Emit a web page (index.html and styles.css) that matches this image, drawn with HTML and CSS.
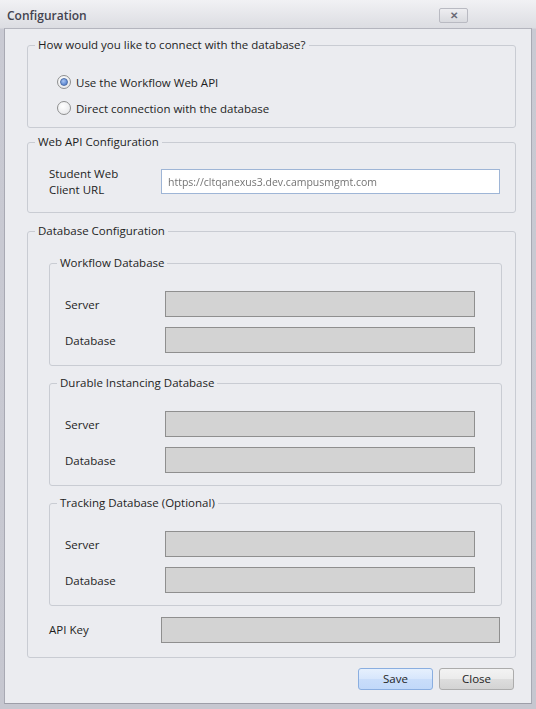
FILE: index.html
```html
<!DOCTYPE html>
<html>
<head>
<meta charset="utf-8">
<link rel="stylesheet" href="styles.css">
</head>
<body>
<div class="window">
  <div class="titlebar">
    <span class="title">Configuration</span>
    <span class="close-x">✕</span>
  </div>
  <div class="content">
    <fieldset class="group g1">
      <legend>How would you like to connect with the database?</legend>
      <label class="radio-row"><span class="radio checked"></span><span>Use the Workflow Web API</span></label>
      <label class="radio-row"><span class="radio"></span><span>Direct connection with the database</span></label>
    </fieldset>

    <fieldset class="group g2">
      <legend>Web API Configuration</legend>
      <div class="url-row">
        <div class="lbl-wide">Student Web<br>Client URL</div>
        <div class="input url"><span class="blur">https://cltqanexus3.dev.campusmgmt.com</span></div>
      </div>
    </fieldset>

    <fieldset class="group g3">
      <legend>Database Configuration</legend>
      <fieldset class="group inner">
        <legend>Workflow Database</legend>
        <div class="row"><div class="lbl">Server</div><div class="input dis"></div></div>
        <div class="row"><div class="lbl">Database</div><div class="input dis"></div></div>
      </fieldset>
      <fieldset class="group inner">
        <legend>Durable Instancing Database</legend>
        <div class="row"><div class="lbl">Server</div><div class="input dis"></div></div>
        <div class="row"><div class="lbl">Database</div><div class="input dis"></div></div>
      </fieldset>
      <fieldset class="group inner last">
        <legend>Tracking Database (Optional)</legend>
        <div class="row"><div class="lbl">Server</div><div class="input dis"></div></div>
        <div class="row"><div class="lbl">Database</div><div class="input dis"></div></div>
      </fieldset>
      <div class="api-row"><div class="lbl-wide">API Key</div><div class="input dis api"></div></div>
    </fieldset>

    <div class="buttons">
      <div class="btn save">Save</div>
      <div class="btn">Close</div>
    </div>
  </div>
</div>
</body>
</html>
```

FILE: styles.css
```css
html, body {
  margin: 0;
  padding: 0;
}
body {
  width: 536px;
  height: 709px;
  overflow: hidden;
  font-family: "Open Sans", "Noto Sans", sans-serif;
  font-size: 11.5px;
  color: #1e1e1e;
}
.window {
  width: 536px;
  height: 709px;
  box-sizing: border-box;
  background: linear-gradient(#f1f1f4 0px, #dcdde2 28px, #c9cad3 29px, #c6c7d0 100%);
  display: flex;
  flex-direction: column;
}
.titlebar {
  height: 28px;
  flex: none;
  display: flex;
  align-items: center;
  position: relative;
}
.title {
  margin-left: 7px;
  font-weight: 600;
  font-size: 12px;
  color: #43434f;
  margin-top: 2px;
}
.close-x {
  position: absolute;
  left: 439px;
  top: 8px;
  width: 29px;
  height: 15px;
  box-sizing: border-box;
  border: 1px solid #b9bac2;
  border-radius: 2px;
  background: linear-gradient(#eeeef1, #d9dadf);
  color: #6a6a76;
  font-size: 10px;
  font-weight: 700;
  line-height: 13px;
  text-align: center;
}
.content {
  margin: 0 4px 5px 4px;
  flex: 1;
  min-height: 0;
  overflow: hidden;
  background: #ebecf0;
  border: 1px solid #a8a9b3;
  border-top-color: #b4b5be;
  border-bottom-color: #9d9ea8;
  padding: 0 15px 0 22px;
  display: flex;
  flex-direction: column;
}
.group {
  margin: 0;
  border: 1px solid #c9ccd3;
  border-radius: 3px;
  min-width: 0;
  flex: none;
}
.group legend {
  padding: 0 3px;
  line-height: 16px;
  height: 16px;
}
.g1 {
  margin-top: 8px;
  padding: 16px 0 6px 29px;
}
.g1 > legend {
  margin-left: -22px;
}
.radio-row {
  display: flex;
  align-items: center;
  height: 26px;
}
.radio {
  width: 12px;
  height: 12px;
  border-radius: 50%;
  border: 1px solid #8e8f8f;
  background: radial-gradient(circle at 40% 35%, #ffffff, #e2e3e6);
  margin-right: 5px;
  box-sizing: content-box;
  display: flex;
  align-items: center;
  justify-content: center;
}
.radio.checked::after {
  content: "";
  width: 6px;
  height: 6px;
  border-radius: 50%;
  background: radial-gradient(circle at 40% 35%, #a9c6f3, #3d6dc4);
  border: 1px solid #4e6fa8;
}
.g2 {
  margin-top: 6px;
  padding: 15px 15px 14px 21px;
}
.g2 > legend, .g3 > legend {
  margin-left: -14px;
}
.url-row {
  display: flex;
  align-items: center;
  height: 33px;
}
.lbl-wide {
  width: 112px;
  flex: none;
  line-height: 16px;
}
.input {
  box-sizing: border-box;
  height: 26px;
}
.url {
  flex: 1;
  background: #ffffff;
  border: 1px solid #9eb5d6;
  height: 25px;
  display: flex;
  align-items: center;
  padding-left: 6px;
  font-size: 10.5px;
  color: #747474;
}
.blur {
  filter: blur(0.7px);
}
.g3 {
  margin-top: 10px;
  padding: 16px 15px 14px 21px;
}
.inner {
  padding: 15px 26px 7px 15px;
  margin-right: -2px;
  margin-bottom: 9px;
}
.inner.last {
  margin-bottom: 11px;
}
.inner > legend {
  margin-left: -8px;
}
.row {
  display: flex;
  align-items: center;
  height: 36px;
}
.lbl {
  width: 100px;
  flex: none;
}
.dis {
  flex: 1;
  background: #d3d3d3;
  border: 1px solid #8f8f8f;
}
.api-row {
  display: flex;
  align-items: center;
  height: 26px;
}
.buttons {
  display: flex;
  justify-content: flex-end;
  gap: 6px;
  margin-top: 10px;
  margin-right: 2px;
  flex: none;
}
.btn {
  width: 75px;
  height: 22px;
  box-sizing: border-box;
  border: 1px solid #acacac;
  border-radius: 3px;
  background: linear-gradient(#f3f3f3 0%, #ebebeb 50%, #dddddd 51%, #d3d3d3 100%);
  display: flex;
  align-items: center;
  justify-content: center;
  padding-bottom: 1px;
}
.btn.save {
  border-color: #8aaee0;
  background: linear-gradient(#e6f0fd 0%, #d7e6fc 50%, #c9ddfa 51%, #c1d8f9 100%);
}
```
